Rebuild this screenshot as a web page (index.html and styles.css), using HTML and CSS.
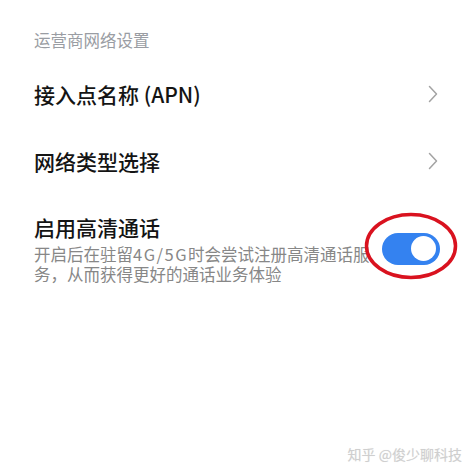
FILE: index.html
```html
<!DOCTYPE html>
<html lang="zh-CN">
<head>
    <meta charset="UTF-8">
    <meta name="viewport" content="width=device-width, initial-scale=1.0">
    <title>运营商网络设置</title>
    <link rel="stylesheet" href="styles.css">
</head>
<body>
    <div class="page">
        <div class="section-title">运营商网络设置</div>

        <div class="row">
            <span class="row-label">接入点名称 (APN)</span>
            <svg class="chevron" width="10" height="18" viewBox="0 0 10 18">
                <polyline points="1.5,1.5 8.5,9 1.5,16.5" fill="none" stroke="#a3a3a3" stroke-width="1.5" stroke-linecap="round" stroke-linejoin="round"/>
            </svg>
        </div>

        <div class="row">
            <span class="row-label">网络类型选择</span>
            <svg class="chevron" width="10" height="18" viewBox="0 0 10 18">
                <polyline points="1.5,1.5 8.5,9 1.5,16.5" fill="none" stroke="#a3a3a3" stroke-width="1.5" stroke-linecap="round" stroke-linejoin="round"/>
            </svg>
        </div>

        <div class="switch-row">
            <div class="switch-text">
                <div class="row-label">启用高清通话</div>
                <div class="switch-desc">开启后在驻留<span class="latin">4G/5G</span>时会尝试注册高清通话服务，从而获得更好的通话业务体验</div>
            </div>
            <div class="toggle-wrap">
                <div class="toggle on"><span class="knob"></span></div>
                <!-- red annotation circle -->
                <svg class="mark" width="94" height="68" viewBox="0 0 94 68">
                    <ellipse cx="47" cy="34" rx="44.5" ry="31.5" fill="none" stroke="#d9121f" stroke-width="3.5"/>
                </svg>
            </div>
        </div>

        <div class="watermark">知乎 @俊少聊科技</div>
    </div>
</body>
</html>
```

FILE: styles.css
```css
body {
    margin: 0;
    background: #ffffff;
    font-family: "Noto Sans CJK SC", "Noto Sans", sans-serif;
}

.page {
    position: relative;
    width: 474px;
    height: 474px;
    overflow: hidden;
}

.section-title {
    padding: 29px 34px 9px;
    font-size: 16.5px;
    line-height: 22px;
    color: #9a9da3;
}

.row {
    display: flex;
    align-items: center;
    justify-content: space-between;
    height: 67px;
    padding: 0 36px 0 34px;
}

.row-label {
    font-size: 21px;
    font-weight: 500;
    line-height: 28px;
    color: #141414;
}

.chevron {
    flex-shrink: 0;
}

.switch-row {
    display: flex;
    align-items: center;
    padding: 19px 34px 0;
}

.switch-text {
    flex: 1;
    padding-right: 10px;
}

.switch-desc {
    margin-top: 3px;
    font-size: 16.5px;
    line-height: 20px;
    color: #878787;
}

.switch-desc .latin {
    letter-spacing: 1.5px;
}

.toggle-wrap {
    position: relative;
    flex-shrink: 0;
}

.toggle {
    width: 58px;
    height: 32px;
    border-radius: 16px;
    background: #3482f0;
    display: flex;
    align-items: center;
    justify-content: flex-end;
    padding: 0 4px;
    box-sizing: border-box;
}

.knob {
    width: 25px;
    height: 25px;
    border-radius: 50%;
    background: #ffffff;
}

.mark {
    position: absolute;
    left: -18px;
    top: -21px;
}

.watermark {
    position: absolute;
    right: 12px;
    bottom: 10px;
    font-size: 14px;
    color: #cfcfcf;
    text-shadow: 0 0 1px #e8e8e8;
}
```
